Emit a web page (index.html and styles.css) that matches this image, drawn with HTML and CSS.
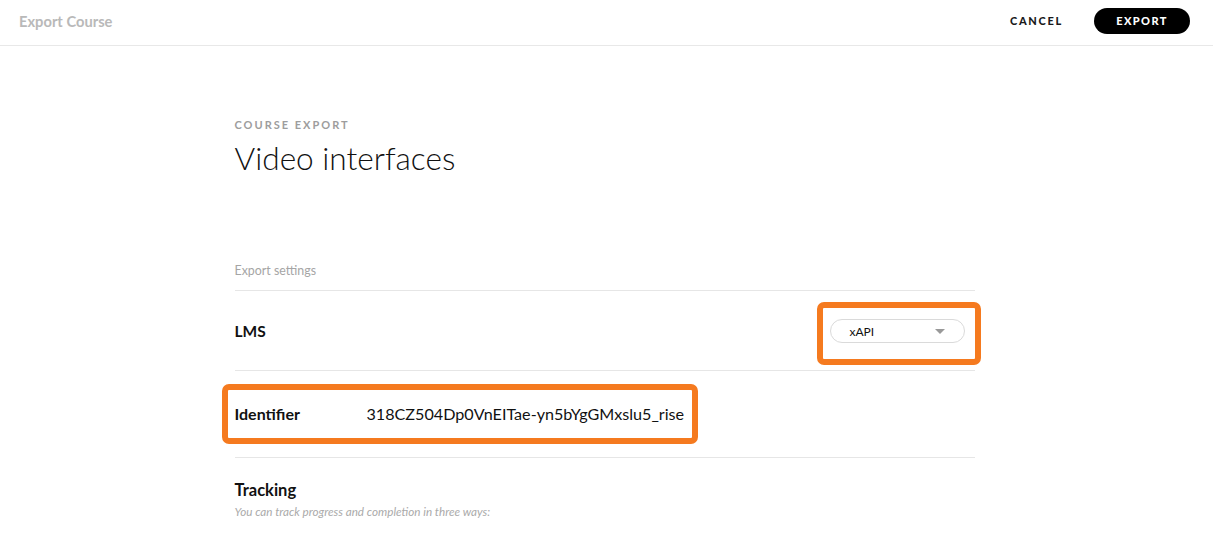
FILE: index.html
```html
<!DOCTYPE html>
<html>
<head>
<meta charset="utf-8">
<link rel="stylesheet" href="styles.css">
</head>
<body>
<header class="topbar">
  <div class="topbar-title">Export Course</div>
  <div class="topbar-actions">
    <button class="btn-cancel">CANCEL</button>
    <button class="btn-export">EXPORT</button>
  </div>
</header>
<main class="content">
  <div class="eyebrow">COURSE EXPORT</div>
  <h1 class="title">Video interfaces</h1>
  <div class="section-label">Export settings</div>
  <div class="row row-lms">
    <div class="row-label">LMS</div>
    <div class="highlight highlight-select">
      <div class="select">
        <span class="select-value">xAPI</span>
        <span class="select-caret"></span>
      </div>
    </div>
  </div>
  <div class="row row-id">
    <div class="highlight highlight-id">
      <div class="row-label id-label">Identifier</div>
      <div class="id-value">318CZ504Dp0VnEITae-yn5bYgGMxslu5_rise</div>
    </div>
  </div>
  <div class="tracking">
    <div class="row-label">Tracking</div>
    <div class="tracking-sub">You can track progress and completion in three ways:</div>
  </div>
</main>
</body>
</html>
```

FILE: styles.css
```css
* { box-sizing: border-box; }
html, body { margin: 0; padding: 0; background: #fff; }
body {
  font-family: Lato, "Open Sans", sans-serif;
  color: #111;
}
.topbar {
  height: 46px;
  border-bottom: 1px solid #e8e8e8;
  display: flex;
  align-items: center;
  justify-content: space-between;
  padding: 0 23px 4px 19px;
}
.topbar-title {
  font-size: 14.7px;
  font-weight: 700;
  color: #b9b9b9;
}
.topbar-actions {
  display: flex;
  align-items: center;
  gap: 31px;
}
button {
  font-family: Lato, sans-serif;
  border: none;
  cursor: pointer;
}
.btn-cancel {
  background: none;
  font-size: 11px;
  font-weight: 900;
  letter-spacing: 1.7px;
  color: #1a1a1a;
  padding: 0;
}
.btn-export {
  background: #000;
  color: #fff;
  font-size: 11px;
  font-weight: 900;
  letter-spacing: 1.4px;
  width: 96px;
  height: 26px;
  border-radius: 13px;
  padding: 0;
}
.content {
  width: 740px;
  margin: 0 auto;
  padding-top: 72px;
  position: relative;
  left: -2px;
}
.eyebrow {
  font-size: 11px;
  line-height: 14px;
  font-weight: 700;
  letter-spacing: 2px;
  color: #9d9d9d;
}
.title {
  margin: 6px 0 0;
  font-size: 31.6px;
  line-height: 40px;
  font-weight: 300;
  color: #111;
}
.section-label {
  margin-top: 85px;
  font-size: 12.4px;
  line-height: 16px;
  color: #a5a5a5;
  padding-bottom: 11px;
  border-bottom: 1px solid #e6e6e6;
}
.row {
  display: flex;
  align-items: center;
  border-bottom: 1px solid #e6e6e6;
}
.row-lms {
  height: 80px;
  justify-content: space-between;
}
.row-label {
  font-size: 15.5px;
  font-weight: 700;
  color: #111;
}
.highlight {
  border: 6px solid #f57a1f;
  border-radius: 7px;
}
.highlight-select {
  margin-top: 6px;
  margin-right: -6px;
  width: 164px;
  height: 63px;
  padding: 11px 10px 0 7px;
}
.select {
  height: 24px;
  border: 1px solid #dadada;
  border-radius: 12px;
  display: flex;
  align-items: center;
  justify-content: space-between;
  padding: 0 19px 0 19px;
}
.select-value {
  font-size: 12px;
  color: #111;
}
.select-caret {
  width: 0;
  height: 0;
  border-left: 5px solid transparent;
  border-right: 5px solid transparent;
  border-top: 5px solid #999;
  margin-top: 1px;
}
.row-id {
  height: 87px;
}
.highlight-id {
  margin-left: -13px;
  height: 60px;
  display: flex;
  align-items: center;
  padding: 0 8px 1px 7px;
}
.id-label {
  width: 132px;
  font-size: 16px;
}
.id-value {
  font-size: 16.15px;
  color: #111;
}
.tracking {
  padding-top: 22px;
}
.tracking .row-label {
  font-size: 16.5px;
  line-height: 20px;
}
.tracking-sub {
  margin-top: 4px;
  font-size: 11.7px;
  line-height: 14px;
  font-style: italic;
  color: #aaa;
}
```
